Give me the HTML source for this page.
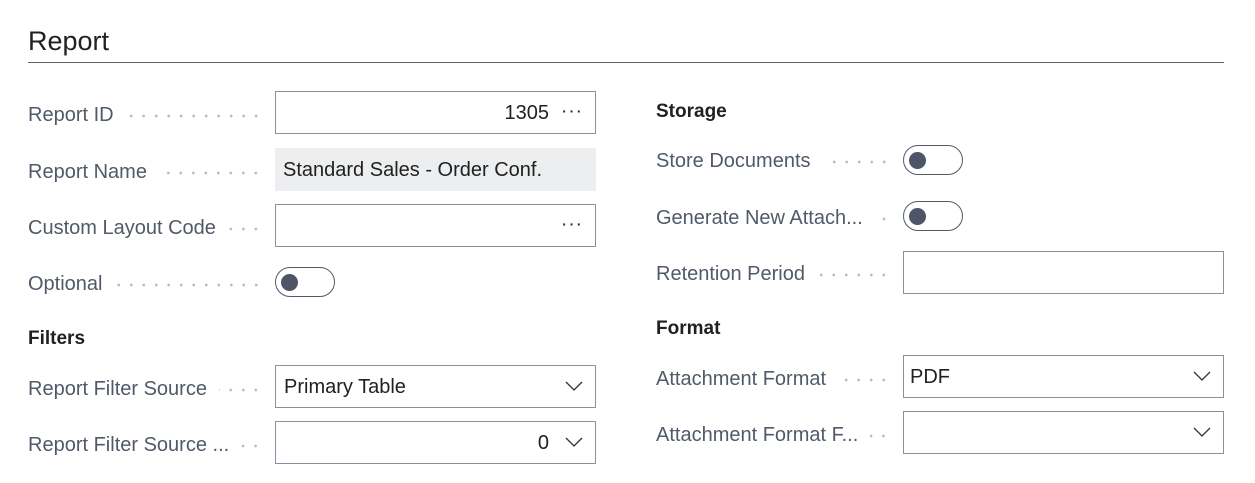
<!DOCTYPE html><html><head><style>
body{margin:0;width:1255px;height:483px;background:#fff;font-family:"Liberation Sans",sans-serif;position:relative;overflow:hidden}
.a{position:absolute}
h1{position:absolute;left:28px;top:26px;margin:0;font-size:27px;font-weight:normal;color:#212121}
.line{left:28px;top:62px;width:1196px;height:1px;background:#5b6270}
.row{position:absolute;display:flex;align-items:center;height:43px}
.lbl{font-size:20px;color:#505a68;white-space:nowrap}
.dots{flex:1;height:4px;margin-left:12px;background:radial-gradient(circle,#b8bcc4 1.2px,transparent 1.6px) right center/12.5px 4px repeat-x}
.box{position:absolute;box-sizing:border-box;border:1px solid #8a919c;height:43px;width:321px;font-size:20px;color:#212121;display:flex;align-items:center;padding:2px 8px 0}
.gray{background:#eceef0;border:none}
.tg{position:absolute;width:60px;height:30px;box-sizing:border-box;border:1px solid #505a68;border-radius:15px}
.tg:after{content:"";position:absolute;left:5px;top:6px;width:17px;height:17px;border-radius:50%;background:#4d5566}
.sec{position:absolute;font-size:19px;font-weight:bold;color:#212121}
.chev{position:absolute;right:12px;top:15px}
.ell{position:absolute;right:12px;top:9px;font-size:19px;letter-spacing:1px}
</style></head><body>
<h1>Report</h1>
<div class="a line"></div>

<div class="row" style="left:28px;top:94px;width:234px"><span class="lbl">Report ID</span><span class="dots"></span></div>
<div class="box" style="left:275px;top:91px;justify-content:flex-end;padding-right:46px">1305<span class="ell">···</span></div>

<div class="row" style="left:28px;top:151px;width:234px"><span class="lbl">Report Name</span><span class="dots"></span></div>
<div class="box gray" style="left:275px;top:148px">Standard Sales - Order Conf.</div>

<div class="row" style="left:28px;top:207px;width:234px"><span class="lbl">Custom Layout Code</span><span class="dots"></span></div>
<div class="box" style="left:275px;top:204px"><span class="ell">···</span></div>

<div class="row" style="left:28px;top:263px;width:234px"><span class="lbl">Optional</span><span class="dots"></span></div>
<div class="tg" style="left:275px;top:267px"></div>

<div class="sec" style="left:28px;top:328px">Filters</div>

<div class="row" style="left:28px;top:368px;width:234px"><span class="lbl">Report Filter Source</span><span class="dots"></span></div>
<div class="box" style="left:275px;top:365px">Primary Table<svg class="chev" width="18" height="11"><path d="M1 1l8 8 8-8" fill="none" stroke="#333" stroke-width="1.3"/></svg></div>

<div class="row" style="left:28px;top:424px;width:234px"><span class="lbl">Report Filter Source ...</span><span class="dots"></span></div>
<div class="box" style="left:275px;top:421px;justify-content:flex-end;padding-right:46px">0<svg class="chev" width="18" height="11"><path d="M1 1l8 8 8-8" fill="none" stroke="#333" stroke-width="1.3"/></svg></div>

<div class="sec" style="left:656px;top:101px">Storage</div>

<div class="row" style="left:656px;top:140px;width:234px"><span class="lbl">Store Documents</span><span class="dots"></span></div>
<div class="tg" style="left:903px;top:145px"></div>

<div class="row" style="left:656px;top:197px;width:234px"><span class="lbl">Generate New Attach...</span><span class="dots"></span></div>
<div class="tg" style="left:903px;top:201px"></div>

<div class="row" style="left:656px;top:253px;width:234px"><span class="lbl">Retention Period</span><span class="dots"></span></div>
<div class="box" style="left:903px;top:251px"></div>

<div class="sec" style="left:656px;top:318px">Format</div>

<div class="row" style="left:656px;top:358px;width:234px"><span class="lbl">Attachment Format</span><span class="dots"></span></div>
<div class="box" style="left:903px;top:355px;padding-left:6px">PDF<svg class="chev" width="18" height="11"><path d="M1 1l8 8 8-8" fill="none" stroke="#333" stroke-width="1.3"/></svg></div>

<div class="row" style="left:656px;top:414px;width:234px"><span class="lbl">Attachment Format F...</span><span class="dots"></span></div>
<div class="box" style="left:903px;top:411px"><svg class="chev" width="18" height="11"><path d="M1 1l8 8 8-8" fill="none" stroke="#333" stroke-width="1.3"/></svg></div>
</body></html>
